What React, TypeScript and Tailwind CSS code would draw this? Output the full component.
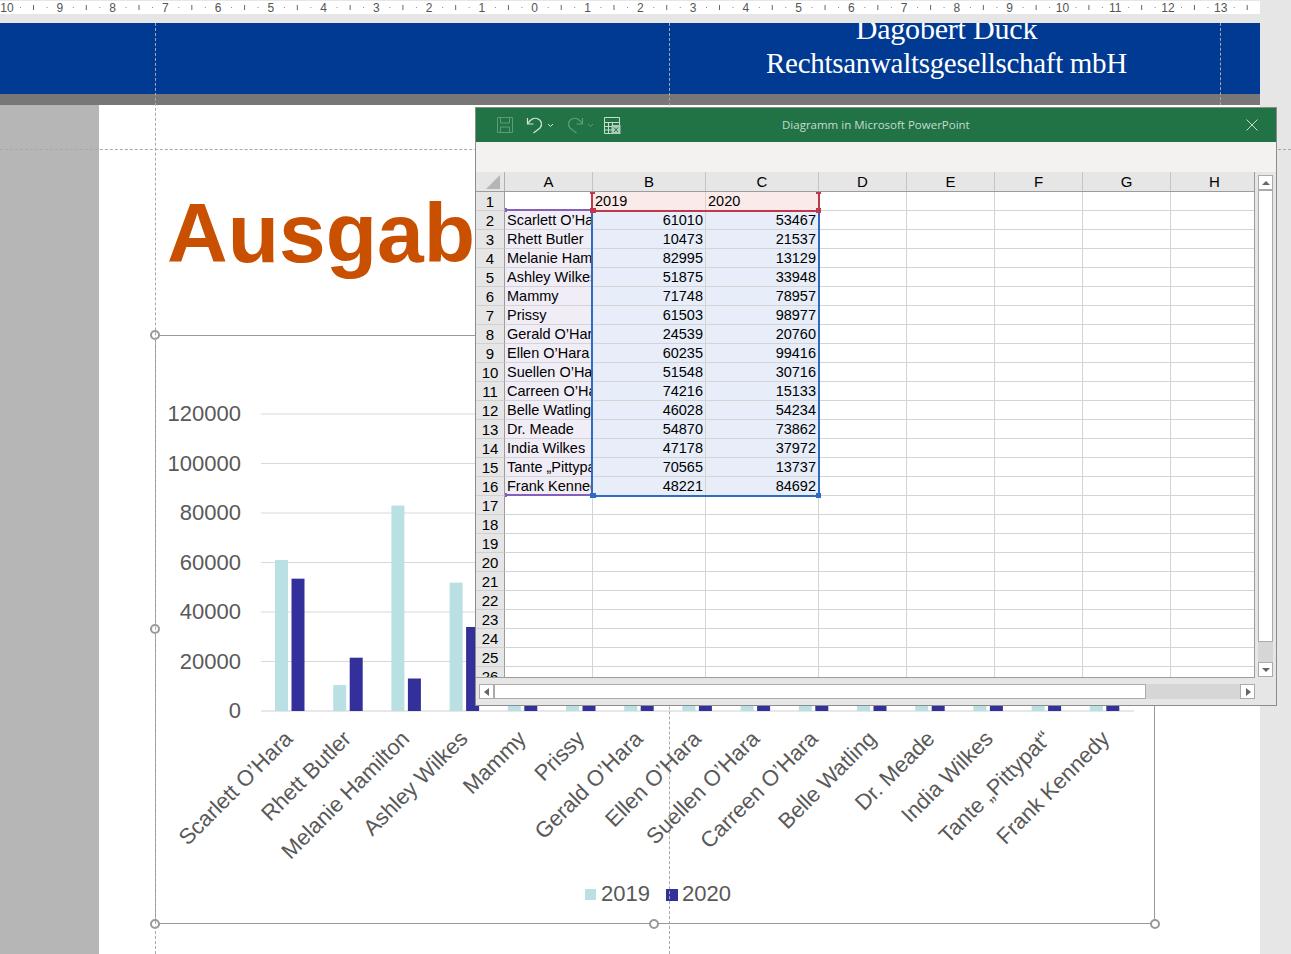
import React from 'react'

const names = ['Scarlett O’Hara', 'Rhett Butler', 'Melanie Hamilton', 'Ashley Wilkes', 'Mammy', 'Prissy', 'Gerald O’Hara', 'Ellen O’Hara', 'Suellen O’Hara', 'Carreen O’Hara', 'Belle Watling', 'Dr. Meade', 'India Wilkes', 'Tante „Pittypat“', 'Frank Kennedy']
const y2019 = [61010, 10473, 82995, 51875, 71748, 61503, 24539, 60235, 51548, 74216, 46028, 54870, 47178, 70565, 48221]
const y2020 = [53467, 21537, 13129, 33948, 78957, 98977, 20760, 99416, 30716, 15133, 54234, 73862, 37972, 13737, 84692]
const axis = [120000, 100000, 80000, 60000, 40000, 20000, 0]
const cols = [
  { label: 'A', w: 'w-[88px]' },
  { label: 'B', w: 'w-[113px]' },
  { label: 'C', w: 'w-[113px]' },
  { label: 'D', w: 'w-[88px]' },
  { label: 'E', w: 'w-[88px]' },
  { label: 'F', w: 'w-[88px]' },
  { label: 'G', w: 'w-[88px]' },
  { label: 'H', w: 'w-[88px]' },
]
const rulerMarks = Array.from({ length: 24 }, (_, i) => i - 10)

// coloured range outlines Excel draws over the chart data
const rangeMarks = [
  'left-[30px] top-[37px] w-[84px] h-[2px] bg-[#8560b8]',
  'left-[30px] top-[322px] w-[84px] h-[2px] bg-[#8560b8]',
  'left-[29px] top-[36px] w-[2px] h-[4px] bg-[#8560b8]',
  'left-[29px] top-[321px] w-[2px] h-[4px] bg-[#8560b8]',
  'left-[115px] top-[22px] w-[2px] h-[16px] bg-[#c0394b]',
  'left-[342px] top-[22px] w-[2px] h-[16px] bg-[#c0394b]',
  'left-[119px] top-[38px] w-[222px] h-[2px] bg-[#c0394b]',
  'left-[114px] top-[20px] w-[5px] h-[2px] bg-[#c0394b]',
  'left-[340px] top-[20px] w-[5px] h-[2px] bg-[#c0394b]',
  'left-[114px] top-[36px] w-[6px] h-[5px] bg-[#c0394b]',
  'left-[340px] top-[36px] w-[5px] h-[5px] bg-[#c0394b]',
  'left-[115px] top-[41px] w-[2px] h-[284px] bg-[#2f6bc5]',
  'left-[342px] top-[41px] w-[2px] h-[284px] bg-[#2f6bc5]',
  'left-[117px] top-[323px] w-[225px] h-[2px] bg-[#2f6bc5]',
  'left-[114px] top-[321px] w-[6px] h-[5px] bg-[#2f6bc5]',
  'left-[340px] top-[321px] w-[5px] h-[5px] bg-[#2f6bc5]',
]

const guides = [
  'left-[155px] top-[23px] h-[931px] border-l',
  'left-[669px] top-[23px] h-[931px] border-l',
  'left-[1220px] top-[23px] h-[82px] border-l',
  'left-0 top-[149px] w-[1291px] border-t',
]

const handles = [
  'left-[-6px] top-[288px]',
  'left-[-6px] top-[-6px]',
  'left-[-6px] bottom-[-6px]',
  'left-[493px] bottom-[-6px]',
  'right-[-6px] bottom-[-6px]',
]

function Ruler() {
  return (
    <svg width="1260" height="13" className="block" style={{ fontFamily: '"Liberation Sans", sans-serif' }}>
      <rect width="1260" height="13" fill="#ffffff" />
      {rulerMarks.map((m) => {
        const x = 534.7 + m * 52.77
        return (
          <g key={m}>
            <text x={x} y="11" textAnchor="middle" fontSize="12" fill="#555555">{Math.abs(m)}</text>
            <rect x={x + 26} y="4" width="1" height="5" fill="#666666" />
            <rect x={x + 13} y="6" width="1" height="1" fill="#888888" />
            <rect x={x + 39.5} y="6" width="1" height="1" fill="#888888" />
          </g>
        )
      })}
    </svg>
  )
}

function Chart() {
  return (
    <svg width="1000" height="589" viewBox="155 335 1000 589" className="block m-[-1px]" style={{ fontFamily: '"Liberation Sans", sans-serif' }}>
      {axis.map((v, i) => {
        const y = 414 + i * 49.5
        return (
          <g key={v}>
            <line x1="261" x2="1134" y1={y} y2={y} stroke={v === 0 ? '#d0d0d0' : '#d9d9d9'} strokeWidth="1" />
            <text x="241" y={y + 7} textAnchor="end" fontSize="22" fill="#595959">{v}</text>
          </g>
        )
      })}
      {names.map((n, i) => {
        const x = 275 + i * 58.2
        const h1 = (y2019[i] * 297) / 120000
        const h2 = (y2020[i] * 297) / 120000
        const tx = 294 + i * 58.35
        const ty = 740
        return (
          <g key={n}>
            <rect x={x} y={711 - h1} width="13" height={h1} fill="#b9e0e2" />
            <rect x={x + 16.5} y={711 - h2} width="13" height={h2} fill="#34309b" />
            <text x={tx} y={ty} textAnchor="end" fontSize="22" fill="#595959" transform={'rotate(-45 ' + tx + ' ' + ty + ')'}>{n}</text>
          </g>
        )
      })}
      <rect x="585" y="889" width="11" height="11" fill="#b9e0e2" />
      <text x="601" y="901" fontSize="22" fill="#595959">2019</text>
      <rect x="666" y="889" width="12" height="12" fill="#34309b" />
      <text x="682" y="901" fontSize="22" fill="#595959">2020</text>
    </svg>
  )
}

function ToolbarIcons() {
  return (
    <div className="flex items-center ml-[20px] gap-[12px]">
      <svg width="18" height="18" viewBox="0 0 18 18" fill="none" stroke="#5c9c79" strokeWidth="1">
        <path d="M1.5 1.5h15v15h-15z" />
        <path d="M4.5 1.5v5.5h9v-5.5M4.5 16.5v-5.5h9v5.5" />
      </svg>
      <div className="flex items-center gap-[3px]">
        <svg width="18" height="18" viewBox="0 0 18 18" fill="none" stroke="#d5e6db" strokeWidth="1.2">
          <path d="M1.5 2v6h6" />
          <path d="M2 7.5C4 3.5 8 1.5 11 2.5c5 1.5 5.5 6.5 3 9.5l-6.5 5" />
        </svg>
        <svg width="7" height="5" viewBox="0 0 7 5" fill="none" stroke="#d5e6db"><path d="M1 1l2.5 2.5L6 1" /></svg>
      </div>
      <div className="flex items-center gap-[3px]">
        <svg width="18" height="18" viewBox="0 0 18 18" fill="none" stroke="#5c9c79" strokeWidth="1.2">
          <path d="M16.5 2v6h-6" />
          <path d="M16 7.5C14 3.5 10 1.5 7 2.5c-5 1.5-5.5 6.5-3 9.5l6.5 5" />
        </svg>
        <svg width="7" height="5" viewBox="0 0 7 5" fill="none" stroke="#5c9c79"><path d="M1 1l2.5 2.5L6 1" /></svg>
      </div>
      <svg width="17" height="17" viewBox="0 0 17 17" fill="none" stroke="#c8dfd0" strokeWidth="1" className="ml-[-2px]">
        <path d="M.5.5h15v5H.5zM.5 5.5v11h8M.5 9.5h8M.5 13h8M4.5 5.5v11M8.5 5.5v4M15.5 5.5v3" />
        <rect x="7.5" y="8" width="9" height="9" fill="#a9cfb7" stroke="none" />
        <path d="M10 10.5l4 4.5M14 10.5l-4 4.5" stroke="#217346" />
      </svg>
    </div>
  )
}

function ScrollButton({ dir }: { dir: 'up' | 'down' | 'left' | 'right' }) {
  const arrow = {
    up: 'M1 6l4-4 4 4z',
    down: 'M1 2l4 4 4-4z',
    left: 'M7 0v8L2 4z',
    right: 'M3 0v8l5-4z',
  }[dir]
  return (
    <div className="w-[15px] h-[15px] shrink-0 bg-white border border-[#ababab] flex items-center justify-center">
      <svg width="10" height="8" viewBox="0 0 10 8" fill="#666666"><path d={arrow} /></svg>
    </div>
  )
}

function Sheet() {
  return (
    <div className="relative w-[779px] h-[506px] overflow-hidden border-r border-b border-[#9c9c9c]">
      <div className="flex h-[20px] border-b border-[#9c9c9c] bg-[#e6e6e6]">
        <div className="w-[29px] shrink-0 border-r border-[#b0b0b0] flex items-end justify-end pr-[4px] pb-[2px]">
          <svg width="14" height="14" viewBox="0 0 14 14" fill="#b5b5b5"><path d="M14 0v14H0z" /></svg>
        </div>
        {cols.map((c) => (
          <div key={c.label} className={c.w + ' shrink-0 border-r border-[#c4c4c4] flex items-center justify-center text-[15px] leading-none text-black'}>{c.label}</div>
        ))}
      </div>
      {Array.from({ length: 26 }, (_, r) => {
        const i = r - 1
        return (
          <div key={r} className="flex h-[19px]">
            <div className="w-[29px] shrink-0 bg-[#e6e6e6] border-r border-b border-r-[#9c9c9c] border-b-[#d0d0d0] flex items-center justify-center text-[15px] leading-none text-black">{r + 1}</div>
            {cols.map((c, ci) => {
              let bg = 'bg-white'
              let text = ''
              let align = 'pl-[2px] text-left'
              if (r === 0 && ci === 1) { bg = 'bg-[#fbeaea]'; text = '2019' }
              if (r === 0 && ci === 2) { bg = 'bg-[#fbeaea]'; text = '2020' }
              if (r > 0 && r < 16) {
                if (ci === 0) { bg = 'bg-[#f1edf7]'; text = names[i] }
                if (ci === 1) { bg = 'bg-[#e7eef9]'; text = String(y2019[i]); align = 'pr-[2px] text-right' }
                if (ci === 2) { bg = 'bg-[#e7eef9]'; text = String(y2020[i]); align = 'pr-[2px] text-right' }
              }
              return (
                <div key={c.label} className={c.w + ' ' + bg + ' ' + align + ' shrink-0 overflow-hidden whitespace-nowrap border-r border-b border-[#d4d4d4] text-[14.5px] leading-[19px] text-black'}>{text}</div>
              )
            })}
          </div>
        )
      })}
      {rangeMarks.map((m) => (
        <span key={m} className={'absolute ' + m} />
      ))}
    </div>
  )
}

function ExcelWindow() {
  return (
    <div className="absolute left-[475px] top-[107px] z-20 w-[802px] h-[599px] border border-[#8c8c8c] bg-[#e6e6e6] flex flex-col" style={{ fontFamily: '"Liberation Sans", Arial, sans-serif' }}>
      <div className="h-[34px] shrink-0 bg-[#217346] flex items-center">
        <ToolbarIcons />
        <span className="ml-[161px] text-[11.5px] leading-[14px] text-[#c5dccd]" style={{ fontFamily: '"Open Sans", sans-serif' }}>Diagramm in Microsoft PowerPoint</span>
        <svg width="12" height="12" viewBox="0 0 12 12" stroke="#c5dccd" className="ml-auto mr-[18px]"><path d="M.5.5l11 11M11.5.5l-11 11" /></svg>
      </div>
      <div className="h-[30px] shrink-0 bg-[#f3f2f1]" />
      <div className="flex h-[506px] shrink-0">
        <Sheet />
        <div className="ml-[3px] mt-[3px] w-[15px] h-[502px] bg-[#d6d6d6] flex flex-col">
          <ScrollButton dir="up" />
          <div className="h-[452px] bg-white border border-[#ababab]" />
          <div className="flex-1" />
          <ScrollButton dir="down" />
        </div>
      </div>
      <div className="mt-[6px] ml-[3px] w-[776px] h-[15px] bg-[#d6d6d6] flex">
        <ScrollButton dir="left" />
        <div className="w-[652px] bg-white border border-[#ababab]" />
        <div className="flex-1" />
        <ScrollButton dir="right" />
      </div>
    </div>
  )
}

export default function App() {
  return (
    <div className="relative w-[1291px] h-[954px] overflow-hidden bg-[#e6e6e6] flex flex-col" style={{ fontFamily: '"Liberation Sans", Arial, sans-serif' }}>
      <div className="h-[23px] shrink-0 pt-[1px]">
        <Ruler />
      </div>
      <div className="w-[1260px] h-[71px] shrink-0 overflow-hidden bg-[#003a92] flex flex-col items-center pl-[633px] text-white leading-[35px]" style={{ fontFamily: '"Liberation Serif", serif' }}>
        <div className="mt-[-12px] text-[30px] tracking-[-0.2px]">Dagobert Duck</div>
        <div className="whitespace-nowrap text-[29px] tracking-[-0.3px]">Rechtsanwaltsgesellschaft mbH</div>
      </div>
      <div className="w-[1260px] h-[11px] shrink-0 bg-[#777777]" />
      <div className="flex flex-1">
        <div className="w-[99px] bg-[#b6b6b6]" />
        <div className="w-[1161px] bg-white pl-[56px] pt-[80px]">
          <h1 className="ml-[12px] h-[96px] whitespace-nowrap text-[84px] leading-[96px] font-bold text-[#c85000]">Ausgabe</h1>
          <div className="relative mt-[54px] w-[1000px] h-[589px] border border-[#999999]">
            <Chart />
            {handles.map((h) => (
              <span key={h} className={'absolute w-[10px] h-[10px] rounded-full border-2 border-[#999999] bg-white ' + h} />
            ))}
          </div>
        </div>
      </div>

      {guides.map((g) => (
        <div key={g} className={'absolute z-10 border-dashed border-[#a8a8a8] ' + g} />
      ))}

      <ExcelWindow />
    </div>
  )
}
